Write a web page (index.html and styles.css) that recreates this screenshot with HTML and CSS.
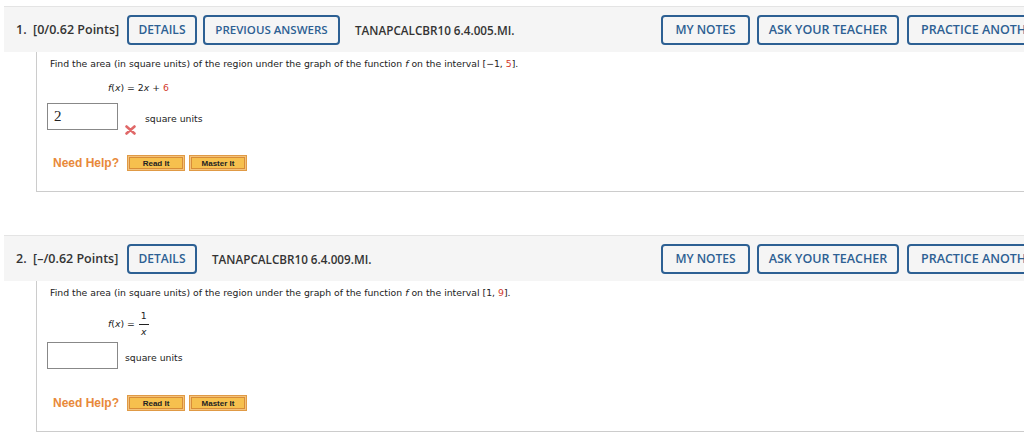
FILE: index.html
```html
<!DOCTYPE html>
<html>
<head>
<meta charset="utf-8">
<link rel="stylesheet" href="styles.css">
</head>
<body>
<div class="page">
  <section class="question q1">
    <div class="q-header">
      <div class="h-left">
        <span class="q-num">1.&nbsp; [0/0.62 Points]</span>
        <span class="btn w-details">DETAILS</span>
        <span class="btn w-prev">PREVIOUS ANSWERS</span>
        <span class="q-code">TANAPCALCBR10 6.4.005.MI.</span>
      </div>
      <span class="btn w-notes">MY NOTES</span>
      <span class="btn w-ask">ASK YOUR TEACHER</span>
      <span class="btn w-practice">PRACTICE ANOTHER</span>
    </div>
    <div class="q-body">
      <p class="prompt">Find the area (in square units) of the region under the graph of the function <i>f</i> on the interval [&minus;1, <span class="red">5</span>].</p>
      <p class="formula"><i>f</i>(<i>x</i>) = 2<i>x</i> + <span class="red">6</span></p>
      <div class="answer-row">
        <div class="answer-box">2</div>
        <svg class="wrong" width="11" height="10" viewBox="0 0 11 10"><path d="M1.5 1.5 L9.5 8.5 M9.5 1.5 L1.5 8.5" stroke="#e06868" stroke-width="2.6" stroke-linecap="round"/></svg>
        <span class="units units-wrong">square units</span>
      </div>
      <div class="help">
        <span class="need">Need Help?</span>
        <span class="hbtn">Read It</span>
        <span class="hbtn">Master It</span>
      </div>
    </div>
  </section>

  <section class="question q2">
    <div class="q-header">
      <div class="h-left">
        <span class="q-num">2.&nbsp; [&ndash;/0.62 Points]</span>
        <span class="btn w-details">DETAILS</span>
        <span class="q-code">TANAPCALCBR10 6.4.009.MI.</span>
      </div>
      <span class="btn w-notes">MY NOTES</span>
      <span class="btn w-ask">ASK YOUR TEACHER</span>
      <span class="btn w-practice">PRACTICE ANOTHER</span>
    </div>
    <div class="q-body">
      <p class="prompt">Find the area (in square units) of the region under the graph of the function <i>f</i> on the interval [1, <span class="red">9</span>].</p>
      <div class="formula frac-row"><span><i>f</i>(<i>x</i>) =</span>
        <span class="frac"><span class="num">1</span><span class="den"><i>x</i></span></span>
      </div>
      <div class="answer-row">
        <div class="answer-box"></div>
        <span class="units">square units</span>
      </div>
      <div class="help help2">
        <span class="need">Need Help?</span>
        <span class="hbtn">Read It</span>
        <span class="hbtn">Master It</span>
      </div>
    </div>
  </section>
</div>
</body>
</html>
```

FILE: styles.css
```css
html, body {
  margin: 0;
  padding: 0;
  background: #ffffff;
}
.page {
  width: 1024px;
  overflow: hidden;
  padding-left: 4px;
  box-sizing: border-box;
}
.question {
  margin-top: 6px;
}
.q2 {
  margin-top: 43px;
}
.q-header {
  height: 45px;
  background: #f5f5f5;
  border-top: 1px solid #e4e4e4;
  display: flex;
  align-items: center;
  padding-left: 12px;
  white-space: nowrap;
  font-family: "Open Sans", sans-serif;
  font-weight: 600;
  font-size: 12px;
  color: #333333;
}
.h-left {
  width: 645px;
  flex: none;
  display: flex;
  align-items: center;
}
.q-num {
  width: 111px;
  flex: none;
  font-size: 12.5px;
}
.btn {
  flex: none;
  height: 30px;
  box-sizing: border-box;
  border: 2px solid #2d6093;
  border-radius: 4px;
  display: flex;
  align-items: center;
  justify-content: center;
  color: #2d6093;
  background: #f5f5f5;
  margin-right: 6px;
  font-size: 12px;
}
.w-details { width: 70px; }
.w-prev { width: 137px; font-size: 11.5px; }
.w-notes { width: 89px; margin-right: 7px; }
.w-ask { width: 142px; margin-right: 8px; font-size: 12.5px; }
.w-practice { width: 152px; justify-content: flex-start; padding-left: 12px; font-size: 12.5px; }
.q-code {
  margin-left: 9px;
  color: #333333;
  font-size: 11.7px;
}
.q-body {
  margin-left: 32px;
  border-left: 1px solid #cccccc;
  border-bottom: 1px solid #cccccc;
  padding-left: 13px;
  font-family: "DejaVu Sans", Verdana, sans-serif;
  font-size: 9.3px;
  color: #222222;
  box-sizing: border-box;
  padding-top: 6px;
}
.q1 .q-body {
  height: 140px;
}
.q2 .q-body {
  height: 151px;
}
.prompt {
  margin: 0;
  line-height: 12px;
}
.formula {
  margin: 12px 0 0 58px;
  line-height: 12px;
}
.red {
  color: #d33a2c;
}
.answer-row {
  display: flex;
  align-items: flex-start;
  margin-top: 9px;
  margin-left: -3px;
}
.answer-box {
  width: 71px;
  height: 27px;
  box-sizing: border-box;
  border: 1px solid #888888;
  font-family: "Liberation Serif", serif;
  font-size: 15px;
  padding: 4px 0 0 6px;
  color: #222;
}
.wrong {
  margin: 22px 0 0 7px;
}
.units {
  margin-top: 10px;
  margin-left: 7px;
}
.units-wrong {
  margin-left: 9px;
}
.help {
  display: flex;
  align-items: center;
  margin-top: 20px;
  margin-left: 3px;
}
.help2 {
  margin-top: 26px;
}
.need {
  font-family: "Liberation Sans", Arial, sans-serif;
  font-weight: bold;
  font-size: 12px;
  color: #e8893a;
  width: 74px;
}
.hbtn {
  width: 58px;
  height: 16px;
  box-sizing: border-box;
  border: 1px solid #e09a45;
  box-shadow: inset 0 0 0 1px #f3c27a, inset 0 0 0 2px #d88d38;
  background: #f6c04e;
  font-family: "Liberation Sans", Arial, sans-serif;
  font-weight: bold;
  font-size: 8px;
  color: #222;
  display: flex;
  align-items: center;
  justify-content: center;
  margin-right: 4px;
}
.frac-row {
  display: flex;
  align-items: center;
  margin-top: 11px;
}
.frac {
  display: inline-flex;
  flex-direction: column;
  align-items: center;
  margin-left: 4px;
}
.frac .num {
  border-bottom: 1px solid #222;
  padding: 0 2px 2px;
  line-height: 12px;
}
.frac .den {
  line-height: 12px;
  padding-top: 1px;
}
.q2 .answer-row {
  margin-top: 4px;
}
```
